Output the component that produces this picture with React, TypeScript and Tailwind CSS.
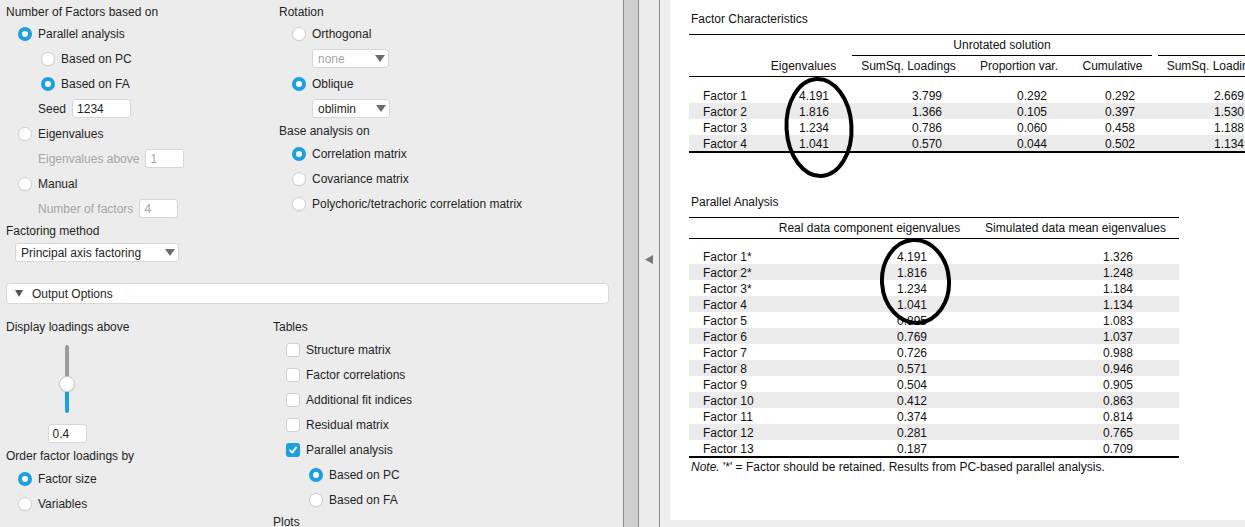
import React from 'react';

function Radio({ on }: { on?: boolean }) {
  return on ? (
    <span className="block w-[14px] h-[14px] rounded-full border-[4px] border-[#1a9fe3] bg-white shrink-0" />
  ) : (
    <span className="block w-[14px] h-[14px] rounded-full border border-[#d0d0d0] bg-white shrink-0 shadow-[0_1px_1px_rgba(0,0,0,0.04)]" />
  );
}

function Check({ on }: { on?: boolean }) {
  return on ? (
    <span className="flex items-center justify-center w-[14px] h-[14px] rounded-[3px] bg-[#1a9fe3] shrink-0">
      <svg width="10" height="10" viewBox="0 0 10 10">
        <path d="M2 5.3 L4.2 7.6 L8.2 2.4" stroke="white" strokeWidth="1.8" fill="none" strokeLinecap="round" strokeLinejoin="round" />
      </svg>
    </span>
  ) : (
    <span className="block w-[14px] h-[14px] rounded-[3px] border border-[#d0d0d0] bg-white shrink-0" />
  );
}

function Row({ cls, children }: { cls: string; children: React.ReactNode }) {
  return <div className={'h-[25px] flex items-center gap-[6px] ' + cls}>{children}</div>;
}

function Label({ children }: { children: React.ReactNode }) {
  return <div className="h-[20px] flex items-center">{children}</div>;
}

function Input({ cls, gray, children }: { cls: string; gray?: boolean; children: React.ReactNode }) {
  return (
    <span
      className={
        'h-[19px] border border-[#d6d6d6] rounded-[3px] bg-white pl-[4px] flex items-center ' +
        (gray ? 'text-[#a6a6a6] ' : 'text-[#1f1f1f] ') +
        cls
      }
    >
      {children}
    </span>
  );
}

function Tri() {
  return (
    <svg width="10" height="7" viewBox="0 0 10 7" className="shrink-0">
      <polygon points="0,0 10,0 5,7" fill="#6b6b6b" />
    </svg>
  );
}

function Select({ cls, disabled, children }: { cls: string; disabled?: boolean; children: React.ReactNode }) {
  return (
    <span
      className={
        'h-[19px] border border-[#d6d6d6] rounded-[3px] bg-white pl-[5px] pr-[3px] flex items-center justify-between ' +
        (disabled ? 'text-[#a6a6a6] ' : 'text-[#1f1f1f] ') +
        cls
      }
    >
      <span>{children}</span>
      <Tri />
    </span>
  );
}

const factorRows = [
  ['Factor 1', '4.191', '3.799', '0.292', '0.292', '2.669'],
  ['Factor 2', '1.816', '1.366', '0.105', '0.397', '1.530'],
  ['Factor 3', '1.234', '0.786', '0.060', '0.458', '1.188'],
  ['Factor 4', '1.041', '0.570', '0.044', '0.502', '1.134'],
];

const parallelRows = [
  ['Factor 1*', '4.191', '1.326'],
  ['Factor 2*', '1.816', '1.248'],
  ['Factor 3*', '1.234', '1.184'],
  ['Factor 4', '1.041', '1.134'],
  ['Factor 5', '0.895', '1.083'],
  ['Factor 6', '0.769', '1.037'],
  ['Factor 7', '0.726', '0.988'],
  ['Factor 8', '0.571', '0.946'],
  ['Factor 9', '0.504', '0.905'],
  ['Factor 10', '0.412', '0.863'],
  ['Factor 11', '0.374', '0.814'],
  ['Factor 12', '0.281', '0.765'],
  ['Factor 13', '0.187', '0.709'],
];

const FT = 'grid grid-cols-[69px_91px_119px_102px_85px_118px_102px_85px]';
const PT = 'grid grid-cols-[78px_205px_207px]';

function FactorTable() {
  return (
    <div className="w-[771px] border-t border-black">
      <div className={FT + ' h-[21px]'}>
        <div className="col-span-2" />
        <div className="col-span-3 mx-[3px] border-b border-black flex items-center justify-center">Unrotated solution</div>
        <div className="col-span-3 mx-[3px] border-b border-black flex items-center justify-center">Rotated solution</div>
      </div>
      <div className={FT + ' h-[21px] border-b border-black items-center text-center'}>
        <div />
        <div>Eigenvalues</div>
        <div>SumSq. Loadings</div>
        <div>Proportion var.</div>
        <div>Cumulative</div>
        <div>SumSq. Loadings</div>
        <div>Proportion var.</div>
        <div>Cumulative</div>
      </div>
      <div className="h-[10px]" />
      {factorRows.map((r, i) => (
        <div key={r[0]} className={FT + ' h-[16px] items-center ' + (i % 2 === 1 ? 'bg-[#ebebeb]' : '')}>
          <div className="pl-[14px]">{r[0]}</div>
          <div className="text-right pr-[20px]">{r[1]}</div>
          <div className="text-right pr-[26px]">{r[2]}</div>
          <div className="text-right pr-[23px]">{r[3]}</div>
          <div className="text-right pr-[20px]">{r[4]}</div>
          <div className="text-right pr-[29px]">{r[5]}</div>
          <div />
          <div />
        </div>
      ))}
      <div className="h-[2px] bg-black" />
    </div>
  );
}

function ParallelTable() {
  return (
    <div className="w-[490px] border-t border-black">
      <div className={PT + ' h-[21px] border-b border-black items-center text-center'}>
        <div />
        <div>Real data component eigenvalues</div>
        <div>Simulated data mean eigenvalues</div>
      </div>
      <div className="h-[9px]" />
      {parallelRows.map((r, i) => (
        <div key={r[0]} className={PT + ' h-[16px] items-center ' + (i % 2 === 1 ? 'bg-[#ebebeb]' : '')}>
          <div className="pl-[14px]">{r[0]}</div>
          <div className="text-right pr-[45px]">{r[1]}</div>
          <div className="text-right pr-[46px]">{r[2]}</div>
        </div>
      ))}
      <div className="h-[2px] bg-black" />
    </div>
  );
}

export default function App() {
  return (
    <div className="w-[1245px] h-[527px] overflow-hidden flex bg-[#ececec] font-['Liberation_Sans',Arial,sans-serif] text-[12px]">
      {/* Left options pane */}
      <div className="w-[623px] shrink-0 h-[527px] overflow-hidden pl-[6px] pt-[2px] text-[#1f1f1f]">
        <div className="flex">
          <div className="w-[273px] flex flex-col">
            <div className="h-[19px] flex items-center">Number of Factors based on</div>
            <Row cls="pl-[12px]"><Radio on /><span>Parallel analysis</span></Row>
            <Row cls="pl-[35px]"><Radio /><span>Based on PC</span></Row>
            <Row cls="pl-[35px]"><Radio on /><span>Based on FA</span></Row>
            <Row cls="pl-[32px] gap-[4px]"><span>Seed</span><Input cls="w-[59px]">1234</Input></Row>
            <Row cls="pl-[12px]"><Radio /><span>Eigenvalues</span></Row>
            <Row cls="pl-[32px] gap-[5px]"><span className="text-[#a6a6a6]">Eigenvalues above</span><Input cls="w-[39px]" gray>1</Input></Row>
            <Row cls="pl-[12px]"><Radio /><span>Manual</span></Row>
            <Row cls="pl-[32px] gap-[5px]"><span className="text-[#a6a6a6]">Number of factors</span><Input cls="w-[39px]" gray>4</Input></Row>
            <Label>Factoring method</Label>
            <Select cls="ml-[9px] mt-[2px] w-[164px]">Principal axis factoring</Select>
          </div>
          <div className="flex flex-col">
            <div className="h-[19px] flex items-center">Rotation</div>
            <Row cls="pl-[13px]"><Radio /><span>Orthogonal</span></Row>
            <Row cls="pl-[33px]"><Select cls="w-[77px]" disabled>none</Select></Row>
            <Row cls="pl-[13px]"><Radio on /><span>Oblique</span></Row>
            <Row cls="pl-[33px]"><Select cls="w-[78px]">oblimin</Select></Row>
            <Label>Base analysis on</Label>
            <Row cls="pl-[13px]"><Radio on /><span>Correlation matrix</span></Row>
            <Row cls="pl-[13px]"><Radio /><span>Covariance matrix</span></Row>
            <Row cls="pl-[13px]"><Radio /><span>Polychoric/tetrachoric correlation matrix</span></Row>
          </div>
        </div>

        <div className="mt-[21px] w-[603px] h-[21px] bg-white border border-[#d8d8d8] rounded-[4px] flex items-center pl-[8px] gap-[9px]">
          <svg width="8" height="7" viewBox="0 0 8 7"><polygon points="0,0 8,0 4,7" fill="#555555" /></svg>
          <span>Output Options</span>
        </div>

        <div className="flex mt-[13px]">
          <div className="w-[267px] flex flex-col">
            <Label>Display loadings above</Label>
            <div className="w-[121px] flex flex-col items-center pt-[8px]">
              <div className="w-[4px] h-[32px] bg-[#9c9c9c] rounded-t-[2px]" />
              <div className="w-[16px] h-[16px] -mt-[1px] rounded-full bg-white border border-[#c6c6c6] shadow-[0_1px_1px_rgba(0,0,0,0.08)]" />
              <div className="w-[4px] h-[21px] bg-[#1a9fe3] rounded-b-[2px]" />
              <Input cls="w-[39px] mt-[11px] ml-[1px]">0.4</Input>
            </div>
            <div className="mt-[3px]"><Label>Order factor loadings by</Label></div>
            <Row cls="pl-[12px]"><Radio on /><span>Factor size</span></Row>
            <Row cls="pl-[12px]"><Radio /><span>Variables</span></Row>
          </div>
          <div className="flex flex-col">
            <Label>Tables</Label>
            <Row cls="pl-[13px]"><Check /><span>Structure matrix</span></Row>
            <Row cls="pl-[13px]"><Check /><span>Factor correlations</span></Row>
            <Row cls="pl-[13px]"><Check /><span>Additional fit indices</span></Row>
            <Row cls="pl-[13px]"><Check /><span>Residual matrix</span></Row>
            <Row cls="pl-[13px]"><Check on /><span>Parallel analysis</span></Row>
            <Row cls="pl-[36px]"><Radio on /><span>Based on PC</span></Row>
            <Row cls="pl-[36px]"><Radio /><span>Based on FA</span></Row>
            <Label>Plots</Label>
          </div>
        </div>
      </div>

      {/* Splitter */}
      <div className="w-[1px] shrink-0 bg-[#8c8c8c]" />
      <div className="w-[14px] shrink-0 bg-[#cfcfcf]" />
      <div className="w-[1px] shrink-0 bg-[#8c8c8c]" />
      <div className="w-[20px] shrink-0 bg-[#ececec] pt-[255px] pl-[6px]">
        <svg width="8" height="9" viewBox="0 0 8 9"><polygon points="8,0 8,9 0,4.5" fill="#777777" /></svg>
      </div>
      <div className="w-[1px] shrink-0 bg-[#8c8c8c]" />
      <div className="w-[10px] shrink-0 bg-[#eeeeee]" />

      {/* Results pane */}
      <div className="flex-1 flex flex-col bg-[#eeeeee]">
        <div className="relative h-[520px] bg-white overflow-hidden pt-[12px] pl-[19px] text-[#111111]">
          <div className="h-[15px] leading-[15px] pl-[2px]">Factor Characteristics</div>
          <div className="mt-[7px]"><FactorTable /></div>
          <div className="mt-[42px] h-[15px] leading-[15px] pl-[2px]">Parallel Analysis</div>
          <div className="mt-[7px]"><ParallelTable /></div>
          <div className="mt-[2px] h-[15px] leading-[15px] pl-[2px]">
            <span className="italic">Note.</span> '*' = Factor should be retained. Results from PC-based parallel analysis.
          </div>
          <svg className="absolute inset-0 pointer-events-none" width="576" height="520" viewBox="0 0 576 520">
            <ellipse cx="149" cy="127.5" rx="32.5" ry="48.5" fill="none" stroke="#000" strokeWidth="4" transform="rotate(-3 149 127.5)" />
            <ellipse cx="245.5" cy="281.5" rx="33.5" ry="41.5" fill="none" stroke="#000" strokeWidth="4" transform="rotate(-4 245.5 281.5)" />
          </svg>
        </div>
      </div>
    </div>
  );
}
